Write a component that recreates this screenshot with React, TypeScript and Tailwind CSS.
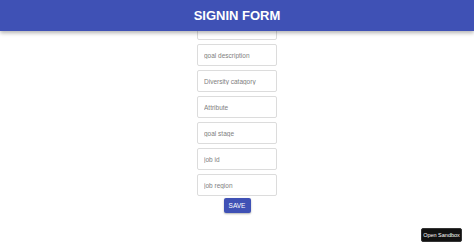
const fields = [
  "",
  "goal description",
  "Diversity catagory",
  "Attribute",
  "goal stage",
  "job id",
  "job region",
];

export default function App() {
  return (
    <div className="relative w-[474px] h-[248px] overflow-hidden bg-white font-['Liberation_Sans',Arial,sans-serif]">
      {/* Header */}
      <header className="absolute top-0 left-0 right-0 z-10 h-[31px] bg-[#3f51b5] shadow-[0_2px_4px_rgba(0,0,0,0.3)] flex items-center justify-center">
        <h1 className="text-[13px] font-bold text-white">SIGNIN FORM</h1>
      </header>

      {/* Form */}
      <form className="flex flex-col items-center pt-[18px]">
        <div className="flex flex-col gap-[4px]">
          {fields.map((f, i) => (
            <input
              key={i}
              placeholder={f}
              className="w-[80px] h-[22px] px-[6px] rounded-[2px] border border-[#dcdcdc] text-[6.5px] text-[#333] placeholder:text-[#808080] outline-none bg-white"
            />
          ))}
        </div>
        <button
          type="button"
          className="mt-[2px] w-[27px] h-[15px] rounded-[2px] bg-[#3f51b5] text-white text-[6.5px] shadow-[0_1px_2px_rgba(0,0,0,0.3)] flex items-center justify-center"
        >
          SAVE
        </button>
      </form>

      {/* Open Sandbox badge */}
      <div className="absolute right-[12px] bottom-[6px] h-[14px] w-[41px] rounded-[2px] bg-[#111] border border-[#333] flex items-center justify-center text-[5.5px] text-white">
        Open Sandbox
      </div>
    </div>
  );
}
